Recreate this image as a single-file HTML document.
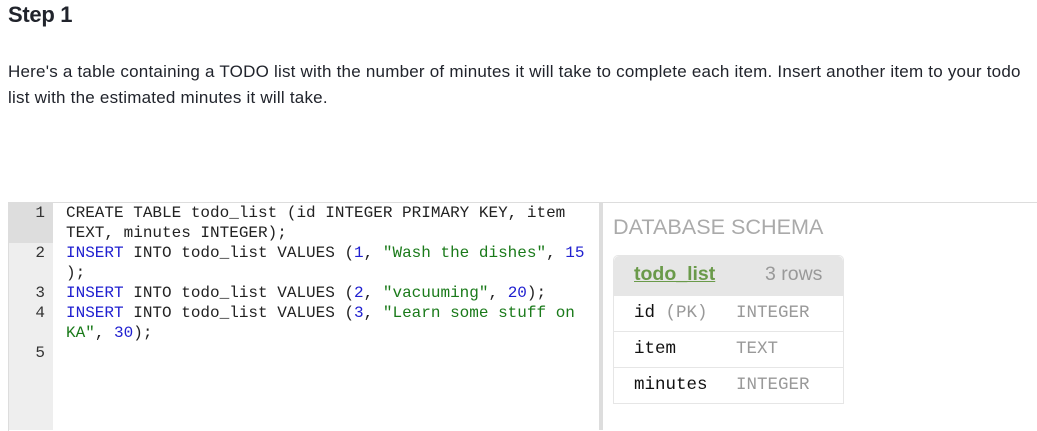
<!DOCTYPE html>
<html><head><meta charset="utf-8"><style>
body{margin:0;background:#fff;width:1037px;height:430px;overflow:hidden;position:relative;font-family:"Liberation Sans",sans-serif;color:#21242c}
.h{position:absolute;left:8px;top:2px;font-size:22px;font-weight:bold;letter-spacing:-0.3px}
.p{position:absolute;left:8px;top:59px;font-size:17px;line-height:26px;white-space:nowrap;letter-spacing:0.22px}
.ed{position:absolute;left:8px;top:202px;width:1029px;height:228px;border-top:1px solid #ddd;border-left:1px solid #ddd}
.gut{position:absolute;left:9px;top:203px;width:44px;height:227px;background:#eee}
.g1{position:absolute;left:9px;top:203px;width:44px;height:40px;background:#ddd}
.code{position:absolute;left:66px;top:203px;font-family:"Liberation Mono",monospace;font-size:16px;line-height:20px;white-space:pre;color:#222}
.ln{position:absolute;left:9px;width:36px;text-align:right;font-family:"Liberation Mono",monospace;font-size:16px;line-height:20px;color:#333}
.k{color:#2020d0}.n{color:#2020d0}.s{color:#1a7a1a}
.div{position:absolute;left:599px;top:203px;width:4px;height:227px;background:#ddd}
.ds{position:absolute;left:613px;top:214px;font-size:21.6px;color:#aaa}
.tb{position:absolute;left:613px;top:255px;width:229px;border:1px solid #e6e6e6;border-radius:5px 5px 0 0}
.th{height:39px;background:#e6e6e6;position:relative;border-radius:5px 5px 0 0}
.th a{position:absolute;left:20px;top:7px;font-size:19.5px;font-weight:bold;color:#6a9a4a;text-decoration:underline}
.th span{position:absolute;left:151px;top:7px;font-size:19.5px;color:#999}
.r{height:35px;border-top:1px solid #e6e6e6;position:relative;font-family:"Liberation Mono",monospace;font-size:17.5px}
.r b{font-weight:normal;position:absolute;left:20px;top:7px;color:#111}
.r i{font-style:normal;position:absolute;left:122px;top:7px;color:#999}
</style></head><body>
<div class="h">Step 1</div>
<div class="p">Here's a table containing a TODO list with the number of minutes it will take to complete each item. Insert another item to your todo<br>list with the estimated minutes it will take.</div>
<div class="ed"></div>
<div class="gut"></div><div class="g1"></div>
<div class="ln" style="top:203px">1</div>
<div class="ln" style="top:243px">2</div>
<div class="ln" style="top:283px">3</div>
<div class="ln" style="top:303px">4</div>
<div class="ln" style="top:343px">5</div>
<div class="code">CREATE TABLE todo_list (id INTEGER PRIMARY KEY, item
TEXT, minutes INTEGER);
<span class="k">INSERT</span> INTO todo_list VALUES (<span class="n">1</span>, <span class="s">"Wash the dishes"</span>, <span class="n">15</span>
);
<span class="k">INSERT</span> INTO todo_list VALUES (<span class="n">2</span>, <span class="s">"vacuuming"</span>, <span class="n">20</span>);
<span class="k">INSERT</span> INTO todo_list VALUES (<span class="n">3</span>, <span class="s">"Learn some stuff on
KA"</span>, <span class="n">30</span>);</div>
<div class="div"></div>
<div class="ds">DATABASE SCHEMA</div>
<div class="tb">
<div class="th"><a>todo_list</a><span>3 rows</span></div>
<div class="r"><b>id <span style="color:#999">(PK)</span></b><i>INTEGER</i></div>
<div class="r"><b>item</b><i>TEXT</i></div>
<div class="r"><b>minutes</b><i>INTEGER</i></div>
</div>
</body></html>
